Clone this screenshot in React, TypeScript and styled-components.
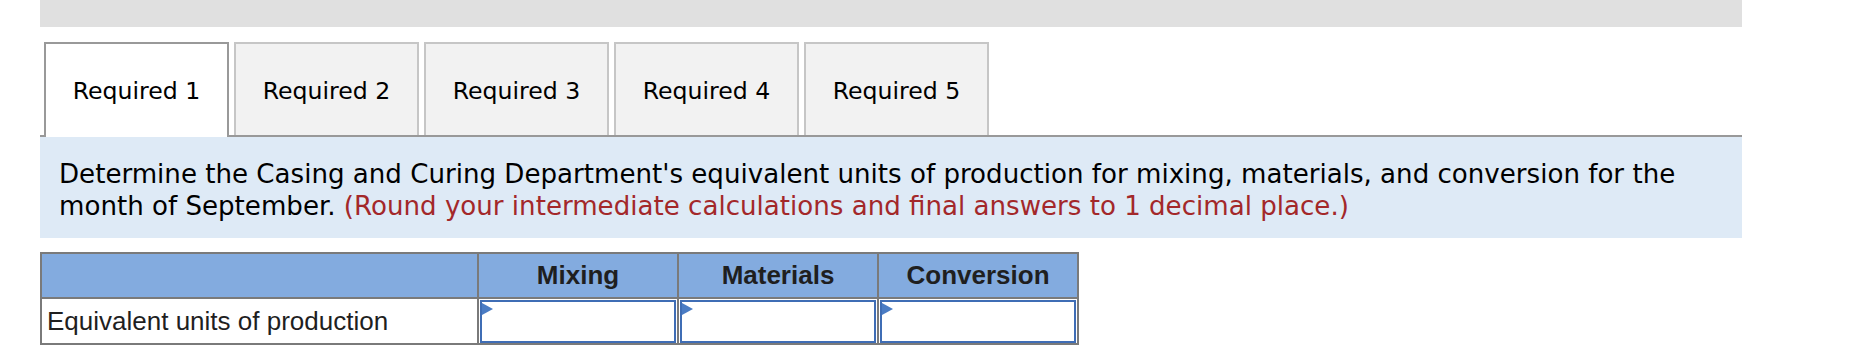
import React from 'react';
import styled, { createGlobalStyle } from 'styled-components';

const GlobalStyle = createGlobalStyle`
  html, body {
    margin: 0;
    padding: 0;
    background: #ffffff;
  }
  body {
    font-family: "DejaVu Sans", Verdana, sans-serif;
  }
`;

const Page = styled.div`
  padding-left: 40px;
  width: 1702px;
`;

const TopBar = styled.div`
  height: 27px;
  background: #e0e0e0;
`;

const TabList = styled.div`
  display: flex;
  align-items: flex-start;
  gap: 5px;
  margin-top: 15px;
  padding-left: 4px;
  border-bottom: 2px solid #999999;
`;

const Tab = styled.div<{ $active?: boolean }>`
  box-sizing: border-box;
  width: 185px;
  height: ${(p) => (p.$active ? 95 : 93)}px;
  margin-bottom: ${(p) => (p.$active ? -2 : 0)}px;
  padding-top: 33px;
  border: 2px solid ${(p) => (p.$active ? '#999999' : '#c6c6c6')};
  border-bottom: none;
  background: ${(p) => (p.$active ? '#ffffff' : '#f2f2f2')};
  font-family: "DejaVu Sans", Verdana, sans-serif;
  font-size: 23.6px;
  line-height: normal;
  color: #000000;
  text-align: center;
  white-space: nowrap;
  cursor: pointer;
`;

const Prompt = styled.div`
  background: #deeaf6;
  padding: 21px 20px 16px 19px;
  font-family: "DejaVu Sans", Verdana, sans-serif;
  font-size: 26.1px;
  line-height: 32px;
  color: #000000;
`;

const Note = styled.span`
  color: #a3282a;
`;

const AnswerGrid = styled.div`
  margin-top: 14px;
  display: grid;
  grid-template-columns: 435px repeat(3, 198px);
  grid-template-rows: 43px 44px;
  gap: 2px;
  padding: 2px;
  width: max-content;
  background: #7a7a7a;
  font-family: "Liberation Sans", Arial, sans-serif;
  font-size: 26px;
  color: #1f1f1f;
`;

const HeadCell = styled.div`
  background: #83abdf;
  display: flex;
  align-items: center;
  justify-content: center;
  font-weight: bold;
`;

const LabelCell = styled.div`
  background: #ffffff;
  display: flex;
  align-items: center;
  padding-left: 5px;
`;

const InputCell = styled.div`
  position: relative;
  background: #ffffff;
  padding: 1px 1px 0 1px;
`;

const AnswerInput = styled.input`
  box-sizing: border-box;
  display: block;
  width: 100%;
  height: 100%;
  margin: 0;
  border: 2px solid #3f6db5;
  background: #ffffff;
  font-family: "Liberation Sans", Arial, sans-serif;
  font-size: 22px;
  outline: none;
`;

const Marker = styled.span`
  position: absolute;
  left: 3px;
  top: 4px;
  width: 0;
  height: 0;
  border-top: 6px solid transparent;
  border-bottom: 6px solid transparent;
  border-left: 11px solid #4a7cc4;
  pointer-events: none;
`;

const tabs = ['Required 1', 'Required 2', 'Required 3', 'Required 4', 'Required 5'];
const columns = ['Mixing', 'Materials', 'Conversion'];

export default function App() {
  return (
    <>
      <GlobalStyle />
      <Page>
        <TopBar />
        <TabList>
          {tabs.map((t, i) => (
            <Tab key={t} $active={i === 0}>
              {t}
            </Tab>
          ))}
        </TabList>
        <Prompt>
          Determine the Casing and Curing Department's equivalent units of production for mixing,
          materials, and conversion for the month of September.{' '}
          <Note>(Round your intermediate calculations and final answers to 1 decimal place.)</Note>
        </Prompt>
        <AnswerGrid>
          <HeadCell />
          {columns.map((c) => (
            <HeadCell key={c}>{c}</HeadCell>
          ))}
          <LabelCell>Equivalent units of production</LabelCell>
          {columns.map((c) => (
            <InputCell key={c}>
              <AnswerInput type="text" aria-label={c} />
              <Marker />
            </InputCell>
          ))}
        </AnswerGrid>
      </Page>
    </>
  );
}
